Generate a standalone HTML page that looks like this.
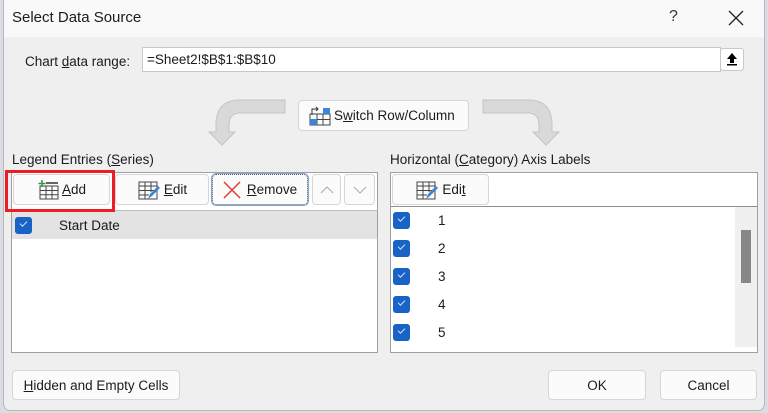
<!DOCTYPE html>
<html><head><meta charset="utf-8"><style>
*{box-sizing:border-box;margin:0;padding:0}
body{width:768px;height:413px;overflow:hidden;background:#d9dde3;font-family:"Liberation Sans",sans-serif;font-size:13px;color:#1b1b1b;position:relative}
.dlg{position:absolute;left:3px;top:0;width:762px;height:411px;background:#efefef;border-radius:0 0 7px 7px;border:1px solid #b8b8b8;border-top:none}
.ttl{position:absolute;left:0;top:0;width:100%;height:37px;background:#f9f9f9}
.a{position:absolute}
.btn{position:absolute;background:#fbfbfb;border:1px solid #d6d6d6;border-radius:4px;display:flex;align-items:center;justify-content:center;font-size:13.5px}
.panel{position:absolute;background:#fff;border:1px solid #a0a0a0}
.cb{position:absolute;width:17px;height:17px;background:#1a63c6;border-radius:3px}
.cb:after{content:"";position:absolute;left:5px;top:4px;width:6px;height:3px;border-left:1px solid #cfe0f7;border-bottom:1px solid #cfe0f7;transform:rotate(-45deg)}
u{text-decoration:underline}
</style></head><body>
<div class="dlg">
<div class="ttl"></div>
</div>
<div class="a" style="left:12px;top:9px;font-size:15px">Select Data Source</div>
<div class="a" style="left:669px;top:8px;font-size:16px;color:#333">?</div>
<svg class="a" style="left:728px;top:10px" width="16" height="16"><path d="M1 1L15 15M15 1L1 15" stroke="#222" stroke-width="1.3"/></svg>

<div class="a" style="left:25px;top:54px;font-size:13.5px">Chart <u>d</u>ata range:</div>
<div class="a" style="left:142px;top:47px;width:579px;height:25px;background:#fff;border:1px solid #c8c8c8;padding:4px 4px;font-size:13.5px">=Sheet2!$B$1:$B$10</div>
<div class="a" style="left:720px;top:48px;width:24px;height:23px;background:#fff;border:1px solid #c8c8c8;border-radius:3px"></div>
<svg class="a" style="left:725px;top:52px" width="14" height="15"><path d="M7 1L12 7H9V11H5V7H2Z" fill="#000"/><rect x="2" y="12" width="10" height="1.5" fill="#000"/></svg>

<svg class="a" style="left:200px;top:95px" width="90" height="55"><path d="M85,5 L40,5 Q16,5 16,30 L16,37 L9,37 L22,50 L35,37 L29,37 L29,30 Q29,18 40,18 L85,18 Z" fill="#d9d9d9" stroke="#c4c4c4"/></svg>
<svg class="a" style="left:478px;top:95px;transform:scaleX(-1)" width="90" height="55"><path d="M85,5 L40,5 Q16,5 16,30 L16,37 L9,37 L22,50 L35,37 L29,37 L29,30 Q29,18 40,18 L85,18 Z" fill="#d9d9d9" stroke="#c4c4c4"/></svg>

<div class="btn" style="left:298px;top:100px;width:171px;height:31px;justify-content:flex-start;padding-left:10px">
<svg width="22" height="20" style="margin-right:3px"><rect x="1" y="8" width="20" height="11" fill="none" stroke="#444"/><path d="M1 13.5H21M8 8V19M14 8V19" stroke="#444"/><rect x="14" y="2" width="7" height="6" fill="#3a86d6"/><rect x="1" y="13" width="7" height="6" fill="#3a86d6"/><path d="M3 9V3H9M7 1L9 3L7 5" stroke="#333" fill="none"/></svg>S<u>w</u>itch Row/Column</div>

<div class="a" style="left:12px;top:152px;font-size:13.5px">Legend Entries (<u>S</u>eries)</div>
<div class="a" style="left:390px;top:152px;font-size:13.5px">Horizontal (<u>C</u>ategory) Axis Labels</div>

<div class="panel" style="left:11px;top:172px;width:367px;height:181px"></div>
<div class="a" style="left:12px;top:210px;width:365px;height:1px;background:#bdbdbd"></div>
<div class="a" style="left:12px;top:211px;width:365px;height:28px;background:#e3e3e3"></div>
<div class="cb" style="left:15px;top:217px"></div>
<div class="a" style="left:59px;top:218px;font-size:13.5px">Start Date</div>

<div class="btn" style="left:13px;top:174px;width:97px;height:31px">
<svg width="22" height="20" style="margin-right:3px"><rect x="3" y="6" width="18" height="13" fill="none" stroke="#444"/><path d="M3 10.5H21M3 14.8H21M9 6V19M15 6V19" stroke="#444"/><path d="M5 0V7M1.5 3.5H8.5" stroke="#2a9a3a" stroke-width="1.5"/><rect x="9" y="2" width="12" height="2" fill="#666"/></svg><u>A</u>dd</div>
<div class="btn" style="left:115px;top:174px;width:94px;height:31px">
<svg width="24" height="20" style="margin-right:3px"><rect x="2" y="2" width="18" height="17" fill="none" stroke="#444"/><path d="M2 6H20M2 10.5H20M2 15H12M8 2V19M14 2V12" stroke="#444"/><path d="M11 19L13 14L21 6L23 8L15 16Z" fill="#3a86d6"/></svg><u>E</u>dit</div>
<div class="btn" style="left:212px;top:174px;width:96px;height:31px;border:1px dotted #555;outline:1px solid #7ea7d8">
<svg width="18" height="18" style="margin-right:6px"><path d="M1 1L17 17M17 1L1 17" stroke="#e23b3b" stroke-width="1.5"/></svg><u>R</u>emove</div>
<div class="btn" style="left:312px;top:174px;width:29px;height:31px"><svg width="14" height="8"><path d="M1 7L7 1L13 7" stroke="#aaa" fill="none"/></svg></div>
<div class="btn" style="left:344px;top:174px;width:31px;height:31px"><svg width="14" height="8"><path d="M1 1L7 7L13 1" stroke="#aaa" fill="none"/></svg></div>
<div class="a" style="left:5px;top:170px;width:110px;height:42px;border:3px solid #ee1c24"></div>

<div class="panel" style="left:390px;top:172px;width:368px;height:181px"></div>
<div class="a" style="left:391px;top:206px;width:366px;height:1px;background:#8e8e8e"></div>
<div class="a" style="left:735px;top:207px;width:22px;height:140px;background:#f0f0f0"></div>
<div class="a" style="left:741px;top:230px;width:10px;height:53px;background:#878787"></div>
<div class="btn" style="left:392px;top:174px;width:97px;height:31px">
<svg width="24" height="20" style="margin-right:3px"><rect x="2" y="2" width="18" height="17" fill="none" stroke="#444"/><path d="M2 6H20M2 10.5H20M2 15H12M8 2V19M14 2V12" stroke="#444"/><path d="M11 19L13 14L21 6L23 8L15 16Z" fill="#3a86d6"/></svg>Edi<u>t</u></div>
<div class="cb" style="left:393px;top:212px"></div><div class="a" style="left:438px;top:213px;font-size:13.5px">1</div>
<div class="cb" style="left:393px;top:240px"></div><div class="a" style="left:438px;top:241px;font-size:13.5px">2</div>
<div class="cb" style="left:393px;top:268px"></div><div class="a" style="left:438px;top:269px;font-size:13.5px">3</div>
<div class="cb" style="left:393px;top:296px"></div><div class="a" style="left:438px;top:297px;font-size:13.5px">4</div>
<div class="cb" style="left:393px;top:324px"></div><div class="a" style="left:438px;top:325px;font-size:13.5px">5</div>

<div class="btn" style="left:12px;top:370px;width:168px;height:30px"><u>H</u>idden and Empty Cells</div>
<div class="btn" style="left:548px;top:370px;width:98px;height:30px">OK</div>
<div class="btn" style="left:660px;top:370px;width:97px;height:30px">Cancel</div>
</body></html>
